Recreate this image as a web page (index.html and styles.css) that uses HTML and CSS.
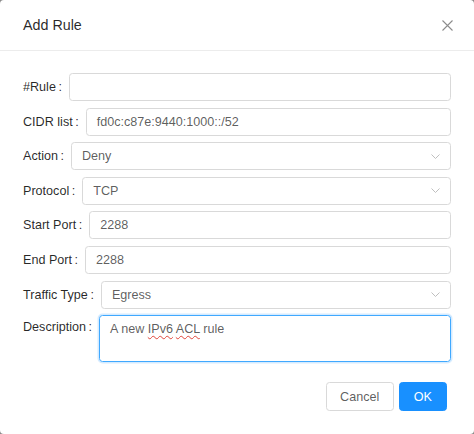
FILE: index.html
```html
<!DOCTYPE html>
<html>
<head>
<meta charset="utf-8">
<link rel="stylesheet" href="styles.css">
</head>
<body>
<div class="modal">
  <div class="modal-header">
    <div class="modal-title">Add Rule</div>
    <svg class="close" width="11" height="11" viewBox="0 0 11 11"><path d="M0.5 0.5 L10.5 10.5 M10.5 0.5 L0.5 10.5" stroke="#8c8c8c" stroke-width="1.1" fill="none"/></svg>
  </div>
  <div class="modal-body">
    <div class="row"><label class="lbl">#Rule</label><div class="field"></div></div>
    <div class="row"><label class="lbl">CIDR list</label><div class="field">fd0c:c87e:9440:1000::/52</div></div>
    <div class="row"><label class="lbl">Action</label><div class="field select">Deny<svg class="chev" width="9" height="5" viewBox="0 0 9 5"><path d="M0.5 0.5 L4.5 4.5 L8.5 0.5" stroke="#bfbfbf" stroke-width="1" fill="none"/></svg></div></div>
    <div class="row"><label class="lbl">Protocol</label><div class="field select">TCP<svg class="chev" width="9" height="5" viewBox="0 0 9 5"><path d="M0.5 0.5 L4.5 4.5 L8.5 0.5" stroke="#bfbfbf" stroke-width="1" fill="none"/></svg></div></div>
    <div class="row"><label class="lbl">Start Port</label><div class="field">2288</div></div>
    <div class="row"><label class="lbl">End Port</label><div class="field">2288</div></div>
    <div class="row"><label class="lbl">Traffic Type</label><div class="field select">Egress<svg class="chev" width="9" height="5" viewBox="0 0 9 5"><path d="M0.5 0.5 L4.5 4.5 L8.5 0.5" stroke="#bfbfbf" stroke-width="1" fill="none"/></svg></div></div>
    <div class="row row-desc"><label class="lbl">Description</label><div class="field textarea">A new <span class="spell">IPv6</span> <span class="spell">ACL</span> rule</div></div>
  </div>
  <div class="modal-footer">
    <button class="btn">Cancel</button>
    <button class="btn btn-primary">OK</button>
  </div>
</div>
</body>
</html>
```
FILE: styles.css
```css
html, body {
  margin: 0;
  padding: 0;
  background: #8a8a8a;
}
body {
  width: 474px;
  height: 434px;
  overflow: hidden;
  font-family: "Liberation Sans", Arial, sans-serif;
}
.modal {
  width: 474px;
  height: 434px;
  background: #fff;
  border-radius: 4px;
  display: flex;
  flex-direction: column;
}
.modal-header {
  height: 50px;
  border-bottom: 1px solid #ececec;
  display: flex;
  align-items: center;
  justify-content: space-between;
  padding: 0 21px 0 23px;
}
.modal-title {
  font-size: 14.3px;
  color: rgba(0, 0, 0, 0.85);
}
.close {
  display: block;
}
.modal-body {
  padding: 22px 23px 0 23px;
}
.row {
  display: flex;
  align-items: center;
  height: 28px;
  margin-bottom: 6.6px;
}
.lbl {
  font-size: 12.6px;
  color: rgba(0, 0, 0, 0.85);
  white-space: nowrap;
}
.lbl::after {
  content: ":";
  margin: 0 7px 0 2.5px;
}
.field {
  flex: 1;
  height: 28px;
  box-sizing: border-box;
  border: 1px solid #d9d9d9;
  border-radius: 3.5px;
  padding: 0 10px;
  font-size: 12.6px;
  color: rgba(0, 0, 0, 0.65);
  display: flex;
  align-items: center;
}
.select {
  justify-content: space-between;
  padding-right: 10px;
}
.chev {
  display: block;
}
.row-desc {
  height: 47px;
  align-items: flex-start;
}
.row-desc .lbl {
  line-height: 28px;
  margin-top: -2px;
}
.textarea {
  display: block;
  height: 47px;
  padding-top: 5px;
  line-height: 16px;
  border-color: #40a9ff;
  box-shadow: 0 0 0 1.5px rgba(24, 144, 255, 0.18);
}
.spell {
  text-decoration: underline wavy #e0453a;
  text-decoration-thickness: 1px;
  text-underline-offset: 2px;
}
.modal-footer {
  display: flex;
  justify-content: flex-end;
  gap: 5px;
  padding: 13.5px 27px 0 0;
}
.btn {
  height: 28.5px;
  box-sizing: border-box;
  border: 1px solid #d9d9d9;
  border-radius: 3.5px;
  background: #fff;
  color: rgba(0, 0, 0, 0.65);
  font-family: "Liberation Sans", Arial, sans-serif;
  font-size: 12.6px;
  padding: 0 13.5px;
  margin: 0;
}
.btn-primary {
  background: #1890ff;
  border-color: #1890ff;
  color: #fff;
  padding: 0 14px;
}
```
